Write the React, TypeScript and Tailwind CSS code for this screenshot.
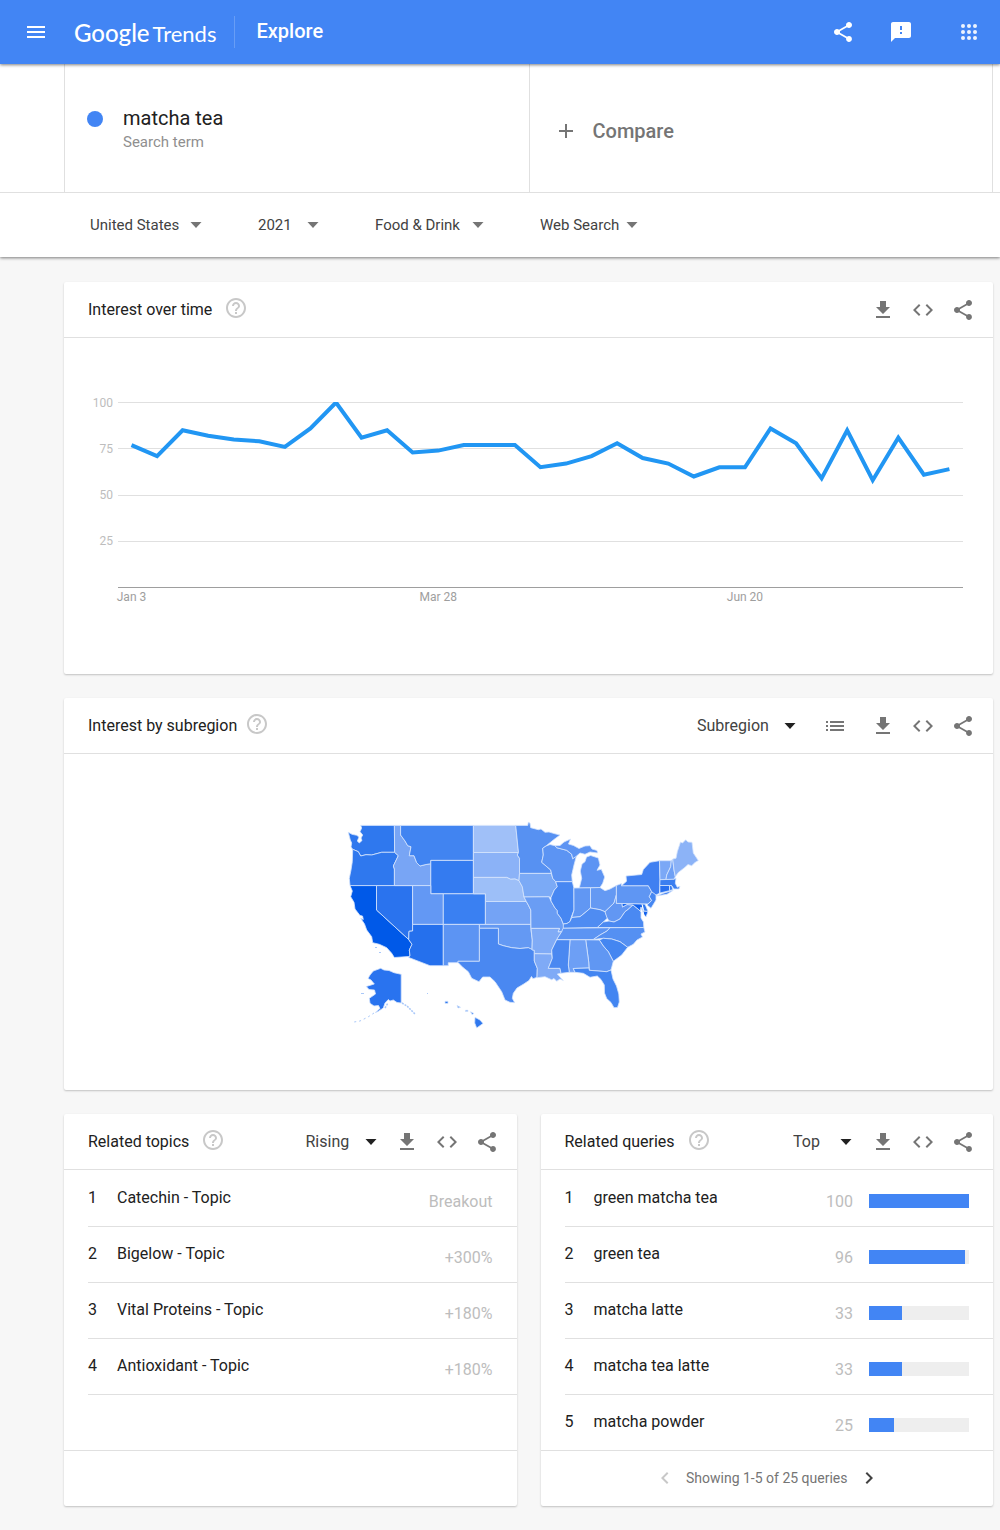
import { useState } from 'react';
import {
  MdAdd,
  MdChevronLeft,
  MdChevronRight,
  MdCode,
  MdFeedback,
  MdHelpOutline,
  MdList,
  MdMenu,
  MdShare,
} from 'react-icons/md';

const interest = [
  77, 71, 85, 82, 80, 79, 76, 86, 100, 81, 85, 73, 74, 77, 77, 77, 65, 67, 71, 78, 70, 67, 60, 65, 65,
  86, 78, 59, 85, 58, 81, 61, 64,
];

const dateLabels = [
  { index: 0, text: 'Jan 3' },
  { index: 12, text: 'Mar 28' },
  { index: 24, text: 'Jun 20' },
];

const topics = [
  { name: 'Catechin - Topic', value: 'Breakout' },
  { name: 'Bigelow - Topic', value: '+300%' },
  { name: 'Vital Proteins - Topic', value: '+180%' },
  { name: 'Antioxidant - Topic', value: '+180%' },
];

const queries = [
  { name: 'green matcha tea', value: 100 },
  { name: 'green tea', value: 96 },
  { name: 'matcha latte', value: 33 },
  { name: 'matcha tea latte', value: 33 },
  { name: 'matcha powder', value: 25 },
];

// name, fill, outline
const states: [string, string, string][] = [
  ['Washington', '#2f78ee', 'M352.7 849.3L351 847 351.7 843 350.3 840 348.3 832.3 352 834.3 356.7 835.3 359 837 357.3 841 359.3 843 362 840.5 361 838 362.7 835 360 831.7 361.7 828 360.7 825.4 394.4 825.4 394.6 852.3 381.7 852.3 371.7 855 366 854.7 360.7 856 358.3 851.7Z'],
  ['Oregon', '#2f78ee', 'M352.7 849.3L358.3 851.7 360.7 856 366 854.7 371.7 855 381.7 852.3 394.6 852.3 398.3 855.7 393.3 866 394.4 869 394.4 885.6 350 885.6 349.3 878.3 351 870 352.3 861.7Z'],
  ['California', '#0059e8', 'M350 885.6L376.5 885.6 376.5 910 408.7 939.5 412 944.3 409.3 950 410 955.5 408.7 956.5 394.3 957.5 391.7 953.3 386.7 947.7 379.3 944.3 372.7 942.7 371.7 936.7 366.7 930 364.5 924 360.7 918.3 363.3 919.5 362.5 916 360 915.5 355 909 354 902.3 350.7 896.7 352.3 891Z'],
  ['Nevada', '#2a73ee', 'M376.5 885.6L412.6 885.6 412.6 931 409 931.3 408.7 939.5 376.5 910Z'],
  ['Idaho', '#78a5f5', 'M394.4 825.4L400.6 825.4 400.6 835 405 841 407.7 845.7 411 846.7 409.3 855.7 414 855.7 416.7 862.7 420 866 425 864.7 430.8 863.7 430.8 885.6 394.4 885.6 394.4 869 393.3 866 398.3 855.7 394.6 852.3Z'],
  ['Montana', '#4184f1', 'M400.6 825.4L473.4 825.4 473.4 860.4 430.8 860.4 430.8 863.7 425 864.7 420 866 416.7 862.7 414 855.7 409.3 855.7 411 846.7 407.7 845.7 405 841 400.6 835Z'],
  ['Wyoming', '#347bf0', 'M430.8 860.4H473.4V893.8H430.8Z'],
  ['Utah', '#6398f4', 'M412.6 885.6H430.8V893.8H443.3V924.4H412.6Z'],
  ['Arizona', '#2570ed', 'M412.6 924.4L443.3 924.4 443.3 965.7 430 965.7 408.7 957.5 410 955.5 409.3 950 412 944.3 408.7 939.5 409 931.3 412.6 931Z'],
  ['Colorado', '#3a80f2', 'M443.3 893.8H485.4V924.4H443.3Z'],
  ['New Mexico', '#5c94f3', 'M443.3 924.4H479.4V961.3H458V962.7H448.3V965.7H443.3Z'],
  ['North Dakota', '#a0c0f8', 'M473.4 825.4L515.7 825.4 516.7 835 517.7 845 518.5 852.5 473.4 852.5Z'],
  ['South Dakota', '#8bb2f7', 'M473.4 852.5L518.5 852.5 517.3 855 519.5 858.3 519.5 873.4 519 880.7 515 879 510.7 879.3 506.7 877.4 473.4 877.4Z'],
  ['Nebraska', '#9dbff8', 'M473.4 877.4L506.7 877.4 510.7 879.3 515 879 519 880.7 522.3 886.7 524 897 526.3 901.5 485.4 901.5 485.4 893.8 473.4 893.8Z'],
  ['Kansas', '#74a3f5', 'M485.4 901.5L526.3 901.5 528.3 905 530.8 910 530.8 924.4 485.4 924.4Z'],
  ['Oklahoma', '#6499f3', 'M479.4 924.4L530.8 924.4 531 930 532.3 940 532 950 528.3 947.7 520 948.5 511.7 947.7 503.3 945.7 498.4 944 498.4 928.3 479.4 928.3Z'],
  ['Texas', '#4a88f1', 'M479.4 928.3L498.4 928.3 498.4 944 503.3 945.7 511.7 947.7 520 948.5 528.3 947.7 534.3 950.3 534.3 961 537.3 968.3 537 977.3 533 978.7 531.5 976.5 529 980.5 523.3 984.3 517 988 513.3 993.3 512.3 998.3 514.7 1002.7 510 1002.3 505 1000 501.7 991.7 495 981.7 490 977 482.7 977 479 981.7 471.7 978.3 468.3 971.7 463 967.5 458 962.5 458 961.3 479.4 961.3Z'],
  ['Minnesota', '#5791f2', 'M515.7 825.4L527.7 825.4 528.3 822.3 530 823 530.7 827.7 538.3 829.7 541 829 545 832.3 549 832 555 833.8 560 835 553.3 840 546 846 542.7 848.3 543.3 855 541.7 862.3 550.7 870 551.3 873.4 519.5 873.4 519.5 858.3 517.3 855 518.5 852.5 517.7 845 516.7 835Z'],
  ['Iowa', '#7baaf6', 'M519.5 873.4L551.3 873.4 552.7 878.3 555.7 881.7 557.3 886.7 554.3 890 551 897.5 549 896.8 524 897 522.3 886.7 519 880.7Z'],
  ['Missouri', '#6a9df4', 'M524 897L549 896.8 551 901 555 908 557.3 910.5 557.3 913.3 561 918.3 563.3 924 564.3 928 561.7 931.7 558 932 559.5 928.4 531 928.4 530.8 910 528.3 905 526.3 901.5Z'],
  ['Arkansas', '#80abf6', 'M531 928.4L559.5 928.4 558 932 561.7 931.7 556.7 939.7 551.7 950 551.7 954 534.3 953.7 534.3 950.3 532 950 532.3 940Z'],
  ['Louisiana', '#7faaf6', 'M534.3 953.7L551.7 954 552.3 958.3 548.3 968.3 560 968.3 561 973.3 557.3 974 560 977 563.3 980.5 560 979 556.7 981.3 554 978.5 551.7 979.8 545 976.7 537 977.7 537.3 968.3 534.3 961Z'],
  ['Wisconsin', '#5c94f3', 'M546 846L550 844.5 555 845.7 556.7 847.7 566.7 850.3 571.7 854.3 572.7 858.7 576.7 855 574 865 571.7 875 572.3 881.7 555.7 881.7 552.7 878.3 550.7 870 541.7 862.3 543.3 855 542.7 848.3Z'],
  ['Illinois', '#4787f2', 'M555.7 881.7L572.3 881.7 573.9 888 574 910 571.7 916 570 921.5 567 923.5 563.3 924 561 918.3 557.3 913.3 557.3 910.5 555 908 551 901 551 897.5 554.3 890 557.3 886.7Z'],
  ['Michigan', '#5d94f3', 'M555 845.7L560 845.5 564 842 570.5 839 568.5 844 573.5 845.5 579 848.5 585 846 590 845.7 592 849 597 850.5 597.7 853 590 852 585 854.3 580 853 576 856.5 572.7 858.7 571.7 854.3 566.7 850.3 556.7 847.7ZM579.3 887.9L581.7 878.3 580.3 871 582 864 585 861.7 586.5 857 590.7 855.5 598.3 858 600 865 597 870.3 601.3 869.3 604.7 877 602.7 883.3 600 887.5Z'],
  ['Indiana', '#6197f3', 'M573.9 888L590.5 887.8 590.5 908 585 912.7 580 916.7 571.7 917.5 574 910Z'],
  ['Ohio', '#6499f3', 'M590.5 887.8L600 887.5 605 890.7 610 889 616.4 885.5 616.4 895 614 903 605 911.7 600 909.7 590.5 908Z'],
  ['Kentucky', '#4f8cf2', 'M571.7 917.5L580 916.7 585 912.7 590.5 908 600 909.7 605 911.7 607.5 918 603.3 922 597.3 927.5 563.3 928.3 563.3 924 567 923.5 570 921.5Z'],
  ['West Virginia', '#6297f3', 'M605 911.7L614 903 616.4 895 616.4 903.4 622 903.4 622.5 907 627 904.5 633 905 628 909.5 625 911.7 620 919 614 922 609 921 606.7 917Z'],
  ['Virginia', '#4a89f2', 'M597.3 927.5L603.3 922 609 921 614 922 620 919 625 911.7 628 909.5 633 905 638 909 641 912 641 918 643.5 922 643.8 927.5Z'],
  ['Tennessee', '#5c94f3', 'M563 928.3L610 927.7 607 931 600 935 593.3 939.5 556.7 939.5 561.7 931.7Z'],
  ['North Carolina', '#5590f2', 'M610 927.7L643.8 927.5 645 932 641 934 642.5 937 637 940 633.3 944.3 627.7 947.3 620 941.7 611.7 939 603.3 938.3 593.3 939.5 600 935 607 931Z'],
  ['South Carolina', '#4486f1', 'M599.3 940L603.3 938.3 611.7 939 620 941.7 627.7 947.3 621.7 955 613.3 961.3 608.3 951.7 603.3 946Z'],
  ['Georgia', '#6097f3', 'M585.7 939.8L599.3 940 603.3 946 608.3 951.7 613.3 961.3 611 970 606.7 971.7 589.3 970.3 588.7 962Z'],
  ['Alabama', '#6d9ff5', 'M570 939.8L585.7 939.8 588.7 962 589 968 573.3 968.5 575 972.3 569.3 972.3 568.3 965Z'],
  ['Mississippi', '#4a88f1', 'M556.7 939.7L570 939.8 568.3 965 569.3 972.3 561 973.3 560 968.3 548.3 968.3 552.3 958.3 551.7 950Z'],
  ['Florida', '#4285f1', 'M573.3 968.5L589 968 589.3 970.3 606.7 971.7 611 970 613 979 616.5 986 618.8 994 619.3 1002 617.5 1007.5 614 1007.7 611 1002.5 606.7 998.5 604.5 993 604.3 985 601 979.5 597.3 976 590 977.3 583.3 973.3 575 972.3Z'],
  ['Maryland', '#1463ec', 'M622 903.4L642 903.9 644 911 648 911.3 646 917 643.5 914 641 907 640.3 911 638 909 633 905 627 904.5 622.5 907Z'],
  ['Delaware', '#2f78ee', 'M642 903.9L645 904 648 911.3 644 911Z'],
  ['Pennsylvania', '#5f96f3', 'M616.4 885.5L621.5 883.5 621.5 885.7 648.3 885.7 651.7 891.7 649.3 896.7 651.7 900.5 648 903.9 616.4 903.4Z'],
  ['New Jersey', '#4687f2', 'M651.7 891.7L656 894 656 900 651 908.3 647 905 651.7 900.5 649.3 896.7Z'],
  ['New York', '#4080f1', 'M621.5 885.7L626.5 881.3 626 876 641.7 874.5 643.3 869.5 650 862.3 659.5 860.7 660 880 659.5 893.3 656 895 651.7 891.7 648.3 885.7ZM656.3 896L664 893 673.3 890.3 667 894.3Z'],
  ['Vermont', '#7ba8f6', 'M659.5 860.7L671.3 860.7 670.7 866.7 666.7 875 666 879.5 660 879.7Z'],
  ['New Hampshire', '#6fa0f5', 'M671.3 860.7L672.7 859 674 870 675.3 876.7 674 879.3 666 879.5 666.7 875 670.7 866.7Z'],
  ['Maine', '#8cb3f7', 'M672.7 859L676 858.3 677.3 851.7 680.5 842 682.5 843 685.7 839.8 688 842 692 842.3 693.3 853 698.3 860.5 695 862.5 691.7 865.7 688 864.5 685 867.3 678.3 872.5 675.3 876.7 674 870Z'],
  ['Massachusetts', '#3a7ef0', 'M660 879.7L674 879.3 676 878 675.3 883.3 677.3 887.3 680 886.3 679 889 674 889 671.5 885.5 659.8 885.5Z'],
  ['Connecticut', '#276fee', 'M659.8 885.5H669.5V890.7L660 893Z'],
  ['Rhode Island', '#3a7ef0', 'M669.5 885.5H671.5L673 889.5 669.5 890.7Z'],
  ['Alaska', '#2973ef', 'M401.2 974.3L401.2 1003 397 1002.5 393.3 1000 390 1001 388.3 999.5 385 1003 383.3 1008 378 1011.5 375 1012.7 380 1008.5 378.5 1005.5 374 1006 370 1003.3 369.3 998.3 375.5 994 374.5 990 369 989.5 366.3 986.5 374.3 984 371 980 368 978.5 370 975 373.3 971 380.7 968.3 384 970 389 970.5 394 972.7Z'],
  ['Hawaii', '#2f78ee', 'M475 1017.3L480 1020 483 1023.5 476.7 1028 474.7 1023ZM445 1001.3H448V1003.5H445ZM457 1005.5L460.5 1007.3 458 1008ZM465.5 1010.3H468V1011.5H465.5ZM470.5 1011.7L474 1013.5 472 1014.5Z'],
];

function DownloadIcon() {
  return (
    <svg width="24" height="24" viewBox="0 0 24 24" fill="currentColor">
      <path d="M19 9h-4V3H9v6H5l7 7 7-7zM5 18v2h14v-2H5z" />
    </svg>
  );
}

function CardIcons() {
  return (
    <div className="flex gap-4 text-[#757575]">
      <button aria-label="Download">
        <DownloadIcon />
      </button>
      <button aria-label="Embed">
        <MdCode size={24} />
      </button>
      <button aria-label="Share">
        <MdShare size={24} />
      </button>
    </div>
  );
}

interface DropdownProps {
  label: string;
  options: string[];
  className: string;
  caret?: string;
}

function Dropdown({ label, options, className, caret = 'fill-[#212121]' }: DropdownProps) {
  const [value, setValue] = useState(options[0]);

  return (
    <div className={`relative flex h-6 items-center ${className}`}>
      <select
        aria-label={label}
        value={value}
        onChange={(e) => setValue(e.target.value)}
        className="w-full cursor-pointer appearance-none bg-transparent outline-none"
      >
        {options.map((option) => (
          <option key={option}>{option}</option>
        ))}
      </select>
      <svg width="24" height="24" className={`pointer-events-none absolute right-0 ${caret}`}>
        <path d="M6.5 9h11L12 15z" />
      </svg>
    </div>
  );
}

interface CardProps {
  title: string;
  helpMargin?: string;
  controls?: React.ReactNode;
  children: React.ReactNode;
}

function Card({ title, helpMargin = 'ml-3', controls, children }: CardProps) {
  return (
    <section className="min-w-0 rounded-xs bg-white shadow-[0_1px_2px_rgba(0,0,0,0.22)]">
      <header className="flex h-14 items-center border-b border-[#e0e0e0] pr-[18px] pl-6">
        <h2 className="text-base text-[#212121]">{title}</h2>
        <button aria-label={`Help: ${title}`} className={`mb-1 text-[#c8c8c8] ${helpMargin}`}>
          <MdHelpOutline size={24} />
        </button>
        <div className="ml-auto flex items-center">
          {controls}
          <CardIcons />
        </div>
      </header>
      {children}
    </section>
  );
}

function InterestChart() {
  const toX = (index: number) => 67.5 + index * 25.56;
  const toY = (value: number) => 249.5 - value * 1.85;
  const points = interest.map((value, index) => `${toX(index)},${toY(value)}`).join(' ');

  return (
    <svg viewBox="0 0 929 336" className="block w-full" role="img" aria-label="Interest over time">
      <clipPath id="plot">
        <rect x="54" y="64" width="845" height="186" />
      </clipPath>
      {[25, 50, 75, 100].map((tick) => (
        <g key={tick}>
          <line x1="54" x2="899" y1={Math.floor(toY(tick)) + 0.5} y2={Math.floor(toY(tick)) + 0.5} stroke="#e0e0e0" />
          <text x="49" y={253 - tick * 1.84} textAnchor="end" className="fill-[#bdbdbd] text-xs">
            {tick}
          </text>
        </g>
      ))}
      <line x1="54" x2="899" y1="249.5" y2="249.5" stroke="#9e9e9e" />
      {dateLabels.map(({ index, text }) => (
        <text key={text} x={toX(index)} y="263" textAnchor="middle" className="fill-[#9e9e9e] text-xs">
          {text}
        </text>
      ))}
      <polyline points={points} fill="none" stroke="#2196f3" strokeWidth="4" clipPath="url(#plot)" />
    </svg>
  );
}

function UsMap() {
  return (
    <svg viewBox="64 754 929 336" className="block w-full" role="img" aria-label="Interest by state">
      {states.map(([name, fill, d]) => (
        <path key={name} d={d} fill={fill} stroke="#d6e4fc" strokeWidth="0.8" strokeLinejoin="round" />
      ))}
      {/* Chesapeake Bay */}
      <path d="M642.3 905L643.5 914 645 921" fill="none" stroke="#fff" strokeWidth="1" />
      {/* Aleutians and Alaska panhandle */}
      <path d="M374 1013L368 1017 360 1021 354 1022" fill="none" stroke="#a9c8f9" strokeDasharray="2 3" />
      <path d="M385 1008L388 1003M402 1003L407 1006 411 1010 415 1014" fill="none" stroke="#a9c8f9" strokeWidth="1.5" strokeDasharray="2 1" />
      <path d="M361 993.5H364M427 993.5H428M375 947.5H377M379 952.5H381" stroke="#a9c8f9" />
    </svg>
  );
}

function Logo() {
  return (
    <a href="#" className="flex items-baseline gap-[3px] pt-0.5 font-[Lato,sans-serif] text-2xl text-white">
      <span className="font-medium">Google</span>
      <span className="text-[22px]">Trends</span>
    </a>
  );
}

export default function App() {
  return (
    <div className="min-h-screen bg-[#f7f7f7] font-[Roboto,sans-serif] text-[#212121]">
      <header className="relative z-10 flex h-16 items-center bg-[#4285f4] pr-[19px] pl-6 text-white shadow-[0_1px_3px_rgba(0,0,0,0.5)]">
        <button aria-label="Main menu">
          <MdMenu size={24} />
        </button>
        <div className="ml-[26px]">
          <Logo />
        </div>
        <div className="ml-[18px] h-8 border-l border-white/20" />
        <h1 className="ml-[21px] pb-0.5 text-xl font-medium">Explore</h1>
        <div className="ml-auto flex items-center">
          <button aria-label="Share">
            <MdShare size={24} />
          </button>
          <button aria-label="Send feedback" className="ml-[34px]">
            <MdFeedback size={24} />
          </button>
          <button aria-label="Google apps" className="ml-11">
            <svg width="24" height="24" className="fill-white/90">
              {[6, 12, 18].map((y) => [6, 12, 18].map((x) => <circle key={`${x}-${y}`} cx={x} cy={y} r="2" />))}
            </svg>
          </button>
        </div>
      </header>

      <div className="relative bg-white shadow-[0_1px_3px_rgba(0,0,0,0.5)]">
        <div className="grid h-[129px] grid-cols-2 border-b border-[#e0e0e0] pr-[7px] pl-16">
          <div className="flex items-center border-l border-[#e0e0e0] pl-[22px]">
            <span className="mb-[18px] size-4 rounded-full bg-[#4285f4]" />
            <div className="ml-5">
              <p className="text-xl">matcha tea</p>
              <p className="text-[15px] leading-5 text-[#8f8f8f]">Search term</p>
            </div>
          </div>
          <div className="flex items-center border-x border-[#e0e0e0] pt-1.5 pl-6">
            <button className="flex items-center gap-[15px] text-xl font-medium text-[#757575]">
              <MdAdd size={24} />
              Compare
            </button>
          </div>
        </div>
        <div className="flex h-16 items-center gap-[50px] pl-[90px] text-[15px] text-[#424242]">
          <Dropdown label="Location" options={['United States', 'Worldwide']} className="w-[118px]" caret="fill-[#757575]" />
          <Dropdown label="Time" options={['2021', '2020']} className="w-[67px]" caret="fill-[#757575]" />
          <Dropdown label="Category" options={['Food & Drink', 'All categories']} className="w-[115px]" caret="fill-[#757575]" />
          <Dropdown label="Search type" options={['Web Search', 'Image Search']} className="w-[104px]" caret="fill-[#757575]" />
        </div>
      </div>

      <main className="flex flex-col gap-6 pt-[25px] pr-[7px] pb-6 pl-16">
        <Card title="Interest over time">
          <InterestChart />
        </Card>

        <Card
          title="Interest by subregion"
          helpMargin="ml-2"
          controls={
            <>
              <Dropdown label="Resolution" options={['Subregion', 'Metro', 'City']} className="mr-[21px] w-[105px] text-[#424242]" />
              <button aria-label="Show as list" className="mr-6 text-[#757575]">
                <MdList size={24} />
              </button>
            </>
          }
        >
          <UsMap />
        </Card>

        <div className="grid grid-cols-2 gap-6">
          <Card
            title="Related topics"
            controls={<Dropdown label="Sort topics" options={['Rising', 'Top']} className="mr-3 w-[77px] text-[#424242]" />}
          >
            <div className="h-70 pl-6">
              <ol className="border-b border-[#e0e0e0]">
                {topics.map((topic, index) => (
                  <li key={topic.name} className="flex h-14 items-center border-t border-[#e0e0e0] pr-6 pb-0.5 first:border-transparent">
                    <span className="w-[29px]">{index + 1}</span>
                    <a href="#">{topic.name}</a>
                    <span className="mt-2 ml-auto text-[#bdbdbd]">{topic.value}</span>
                  </li>
                ))}
              </ol>
            </div>
            <footer className="h-14 border-t border-[#e0e0e0]" />
          </Card>

          <Card
            title="Related queries"
            controls={<Dropdown label="Sort queries" options={['Top', 'Rising']} className="mr-[13px] w-[65px] text-[#424242]" />}
          >
            <ol className="h-70 pl-6">
              {queries.map((query, index) => (
                <li key={query.name} className="flex h-14 items-center border-t border-[#e0e0e0] pr-6 pb-0.5 first:border-transparent">
                  <span className="w-[29px]">{index + 1}</span>
                  <a href="#">{query.name}</a>
                  <span className="mt-2 ml-auto text-[#bdbdbd]">{query.value}</span>
                  <div className="mt-1.5 ml-4 h-3.5 w-[100px] bg-[#eeeeee]">
                    <div className="h-full bg-[#4285f4]" style={{ width: `${query.value}%` }} />
                  </div>
                </li>
              ))}
            </ol>
            <footer className="flex h-14 items-center justify-center gap-[9px] border-t border-[#e0e0e0] pb-0.5 text-sm text-[#757575]">
              <button aria-label="Previous" disabled className="text-[#c8c8c8]">
                <MdChevronLeft size={24} />
              </button>
              <span>Showing 1-5 of 25 queries</span>
              <button aria-label="Next" className="text-[#424242]">
                <MdChevronRight size={24} />
              </button>
            </footer>
          </Card>
        </div>
      </main>
    </div>
  );
}
